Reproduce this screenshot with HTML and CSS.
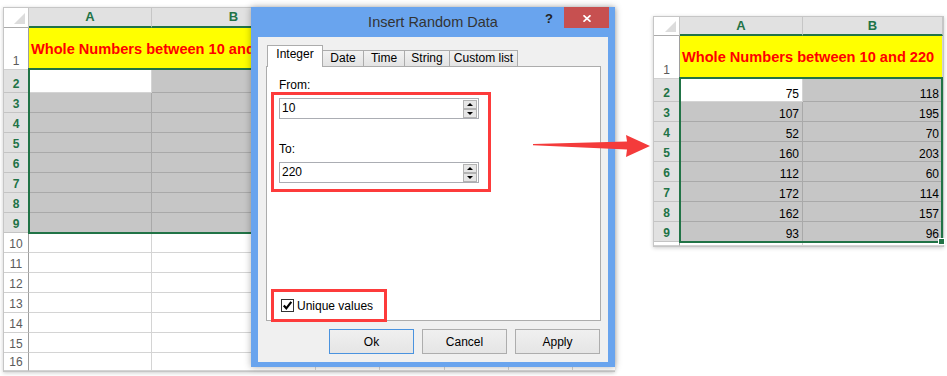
FILE: index.html
```html
<!DOCTYPE html>
<html lang="en">
<head>
	<meta charset="UTF-8">
	<title>Insert Random Data</title>
	<link rel="stylesheet" href="styles.css">
</head>
<body>
	<div class="stage">
		<!-- sheet before -->
		<div class="sheet sheet-left">
			<div class="c h corner"></div><div class="c h sel">A</div><div class="c h sel">B</div><div class="c h"></div><div class="c h"></div><div class="c h"></div><div class="c h"></div><div class="c h"></div>
			<div class="c rh">1</div><div class="c cell-title">Whole Numbers between 10 and 220</div><div class="c"></div><div class="c"></div><div class="c"></div><div class="c"></div><div class="c"></div>
			<div class="c rh sel">2</div><div class="c"></div><div class="c g"></div><div class="c"></div><div class="c"></div><div class="c"></div><div class="c"></div><div class="c"></div>
			<div class="c rh sel">3</div><div class="c g"></div><div class="c g"></div><div class="c"></div><div class="c"></div><div class="c"></div><div class="c"></div><div class="c"></div>
			<div class="c rh sel">4</div><div class="c g"></div><div class="c g"></div><div class="c"></div><div class="c"></div><div class="c"></div><div class="c"></div><div class="c"></div>
			<div class="c rh sel">5</div><div class="c g"></div><div class="c g"></div><div class="c"></div><div class="c"></div><div class="c"></div><div class="c"></div><div class="c"></div>
			<div class="c rh sel">6</div><div class="c g"></div><div class="c g"></div><div class="c"></div><div class="c"></div><div class="c"></div><div class="c"></div><div class="c"></div>
			<div class="c rh sel">7</div><div class="c g"></div><div class="c g"></div><div class="c"></div><div class="c"></div><div class="c"></div><div class="c"></div><div class="c"></div>
			<div class="c rh sel">8</div><div class="c g"></div><div class="c g"></div><div class="c"></div><div class="c"></div><div class="c"></div><div class="c"></div><div class="c"></div>
			<div class="c rh sel">9</div><div class="c g"></div><div class="c g"></div><div class="c"></div><div class="c"></div><div class="c"></div><div class="c"></div><div class="c"></div>
			<div class="c rh">10</div><div class="c"></div><div class="c"></div><div class="c"></div><div class="c"></div><div class="c"></div><div class="c"></div><div class="c"></div>
			<div class="c rh">11</div><div class="c"></div><div class="c"></div><div class="c"></div><div class="c"></div><div class="c"></div><div class="c"></div><div class="c"></div>
			<div class="c rh">12</div><div class="c"></div><div class="c"></div><div class="c"></div><div class="c"></div><div class="c"></div><div class="c"></div><div class="c"></div>
			<div class="c rh">13</div><div class="c"></div><div class="c"></div><div class="c"></div><div class="c"></div><div class="c"></div><div class="c"></div><div class="c"></div>
			<div class="c rh">14</div><div class="c"></div><div class="c"></div><div class="c"></div><div class="c"></div><div class="c"></div><div class="c"></div><div class="c"></div>
			<div class="c rh">15</div><div class="c"></div><div class="c"></div><div class="c"></div><div class="c"></div><div class="c"></div><div class="c"></div><div class="c"></div>
			<div class="c rh">16</div><div class="c"></div><div class="c"></div><div class="c"></div><div class="c"></div><div class="c"></div><div class="c"></div><div class="c"></div>
			<div class="selection"></div>
		</div>

		<!-- dialog -->
		<div class="dialog">
			<div class="titlebar">
				<div class="dialog-title">Insert Random Data</div>
				<div class="title-tools">
					<span class="help">?</span>
					<span class="close">
						<svg width="8" height="7" viewBox="0 0 8 7"><path d="M0.5 0.3 L7.5 6.7 M7.5 0.3 L0.5 6.7" stroke="#fff" stroke-width="1.7"/></svg>
					</span>
				</div>
			</div>
			<div class="dialog-body">
				<div class="tabs">
					<span class="tab tab-integer active">Integer</span>
					<span class="tab tab-date">Date</span>
					<span class="tab tab-time">Time</span>
					<span class="tab tab-string">String</span>
					<span class="tab tab-custom">Custom list</span>
				</div>
				<div class="panel">
					<div class="field-label">From:</div>
					<div class="mark mark-range">
						<div class="spin">
							<span>10</span>
							<span class="spin-btns"><span class="spin-btn up"></span><span class="spin-btn down"></span></span>
						</div>
						<div class="field-label">To:</div>
						<div class="spin">
							<span>220</span>
							<span class="spin-btns"><span class="spin-btn up"></span><span class="spin-btn down"></span></span>
						</div>
					</div>
					<div class="mark mark-check">
						<span class="checkbox">
							<svg width="11" height="11" viewBox="0 0 11 11"><path d="M1.8 5.6 L4.3 8.3 L9.3 1.8" fill="none" stroke="#000" stroke-width="2.2"/></svg>
						</span>
						Unique values
					</div>
				</div>
				<div class="buttons">
					<button class="btn btn-default">Ok</button>
					<button class="btn">Cancel</button>
					<button class="btn">Apply</button>
				</div>
			</div>
		</div>

		<svg class="arrow" width="118" height="24" viewBox="0 0 118 24">
			<polygon points="0,10 94,7.5 93,1 117,12 93,23 94,15.5 0,11.2" fill="#f43b3b"/>
		</svg>

		<!-- sheet after -->
		<div class="sheet sheet-right">
			<div class="c h corner"></div><div class="c h sel">A</div><div class="c h sel">B</div>
			<div class="c rh">1</div><div class="c cell-title">Whole Numbers between 10 and 220</div>
			<div class="c rh sel">2</div><div class="c">75</div><div class="c g">118</div>
			<div class="c rh sel">3</div><div class="c g">107</div><div class="c g">195</div>
			<div class="c rh sel">4</div><div class="c g">52</div><div class="c g">70</div>
			<div class="c rh sel">5</div><div class="c g">160</div><div class="c g">203</div>
			<div class="c rh sel">6</div><div class="c g">112</div><div class="c g">60</div>
			<div class="c rh sel">7</div><div class="c g">172</div><div class="c g">114</div>
			<div class="c rh sel">8</div><div class="c g">162</div><div class="c g">157</div>
			<div class="c rh sel">9</div><div class="c g">93</div><div class="c g">96</div>
			<div class="c rh"></div><div class="c"></div><div class="c"></div>
			<div class="selection"></div>
			<div class="handle"></div>
		</div>
	</div>
</body>
</html>
```

FILE: styles.css
```css
*{
	margin:0;
	padding:0;
	box-sizing:border-box;
}
body{
	background:#fff;
	font-family:"Liberation Sans", Arial, sans-serif;
	font-size:12px;
	color:#000;
}
.stage{
	position:relative;
	display:flex;
	align-items:flex-start;
	width:947px;
	height:376px;
	overflow:hidden;
}

/* spreadsheets */
.sheet{
	position:relative;
	display:grid;
	background:#fff;
	border:1px solid #c6c6c6;
	box-shadow:0 1px 4px rgba(0,0,0,.2);
	line-height:14px;
}
.sheet-left{
	margin:7px 0 0 3px;
	width:612px;
	overflow:hidden;
	border-right:0;
	grid-template-columns:25px 123px 164px 64px 65px 64px 64px 64px;
	grid-template-rows:20px 42px 23px repeat(13,20px) 18px;
}
.sheet-right{
	margin:16px 0 0 38px;
	grid-template-columns:26px 123px 140px;
	grid-template-rows:19px 43px 23px repeat(7,20px) 4px;
}
.c{
	display:flex;
	align-items:flex-end;
	justify-content:flex-end;
	padding:0 3px;
	border-right:1px solid #d4d4d4;
	border-bottom:1px solid #d4d4d4;
	white-space:nowrap;
	overflow:hidden;
}
.c.g{
	background:#c6c6c6;
	border-color:#a9a9a9;
}
.h{
	justify-content:center;
	align-items:center;
	font-size:13px;
	color:#444;
	border-color:#c6c6c6;
	border-bottom-color:#ababab;
}
.h.sel{
	background:#e1e1e1;
	color:#217346;
	font-weight:bold;
	border-bottom:2px solid #217346;
}
.corner{
	justify-content:flex-end;
	align-items:flex-end;
	padding:0 3px 3px 0;
	border-bottom-color:#ababab;
}
.corner::after{
	content:'';
	width:11px;
	height:11px;
	background:#dcdcdc;
	clip-path:polygon(100% 0,100% 100%,0 100%);
}
.rh{
	justify-content:center;
	padding-bottom:1px;
	color:#5a5a5a;
	border-right-color:#9e9e9e;
	border-bottom-color:#d0d0d0;
}
.rh.sel{
	background:#e1e1e1;
	color:#217346;
	font-weight:bold;
	border-bottom-color:#c4c4c4;
}
.cell-title{
	grid-column:span 2;
	justify-content:flex-start;
	align-items:center;
	padding-left:2px;
	background:#ffff00;
	color:#ff0000;
	font-weight:bold;
	font-size:14.6px;
}
/* selection frame sits over cells A2:B9 */
.selection{
	position:absolute;
	grid-row:3 / 11;
	grid-column:2 / 4;
	top:-2px;
	bottom:-1px;
	left:-1px;
	right:0;
	border:2px solid #217346;
}
.handle{
	position:absolute;
	grid-row:10 / 11;
	grid-column:3 / 4;
	right:-2px;
	bottom:-3px;
	width:7px;
	height:7px;
	background:#217346;
	border:1px solid #fff;
}

/* dialog */
.dialog{
	position:absolute;
	left:251px;
	top:7px;
	z-index:2;
	width:364px;
	height:360px;
	display:flex;
	flex-direction:column;
	background:#69a4ee;
	box-shadow:0 0 7px rgba(0,0,0,.3);
}
.titlebar{
	height:30px;
	display:grid;
	grid-template-columns:1fr auto 1fr;
}
.dialog-title{
	grid-column:2;
	padding-top:7px;
	font-size:14.5px;
	line-height:17px;
	color:#333;
	white-space:nowrap;
}
.title-tools{
	grid-column:3;
	display:flex;
	justify-content:flex-end;
	align-items:flex-start;
	padding-right:6px;
}
.help{
	margin:5px 11px 0 0;
	font-size:13px;
	font-weight:bold;
	line-height:14px;
	color:#222;
}
.close{
	width:45px;
	height:21px;
	display:flex;
	align-items:center;
	justify-content:center;
	padding-top:1px;
	background:#c75050;
}
.dialog-body{
	flex:1;
	margin:0 7px 5px;
	padding:8px 7px 8px 8px;
	display:flex;
	flex-direction:column;
	background:#f0f0f0;
}
.tabs{
	position:relative;
	z-index:1;
	height:21px;
	display:flex;
	align-items:flex-end;
	padding-left:1px;
}
.tab{
	height:16px;
	margin-left:-1px;
	border:1px solid #acacac;
	border-bottom:0;
	background:linear-gradient(#f2f2f2,#e3e3e3);
	text-align:center;
	line-height:14px;
}
.tab-integer{ width:56px; margin-left:0; }
.tab-date{ width:42px; }
.tab-time{ width:42px; }
.tab-string{ width:46px; }
.tab-custom{ width:69px; }
.tab.active{
	height:22px;
	margin-bottom:-1px;
	padding-top:1px;
	background:#fff;
}
.panel{
	height:255px;
	display:flex;
	flex-direction:column;
	padding:0 4px;
	border:1px solid #acacac;
	background:#fff;
}
.field-label{
	margin:11px 0 0 8px;
	line-height:14px;
}
.mark{
	border:3px solid #fd3b3b;
}
.mark-range{
	width:220px;
	padding:3px 0 6px 5px;
}
.mark-range .field-label{
	margin:23px 0 6px 0;
}
.spin{
	width:200px;
	height:21px;
	display:flex;
	align-items:flex-start;
	justify-content:space-between;
	padding:0 1px 0 2px;
	border:1px solid #abadb3;
	background:#fff;
	line-height:19px;
}
.spin-btns{
	display:flex;
	flex-direction:column;
	margin-top:1px;
}
.spin-btn{
	width:14px;
	height:9px;
	display:flex;
	align-items:center;
	justify-content:center;
	border:1px solid #b3b3b3;
	background:#e6e6e6;
}
.spin-btn.up::after{
	content:'';
	border-left:3px solid transparent;
	border-right:3px solid transparent;
	border-bottom:3px solid #000;
}
.spin-btn.down::after{
	content:'';
	border-left:3px solid transparent;
	border-right:3px solid transparent;
	border-top:3px solid #000;
}
.mark-check{
	width:116px;
	height:33px;
	margin-top:auto;
	margin-bottom:-2px;
	display:flex;
	align-items:center;
	gap:3px;
	padding-left:7px;
	line-height:14px;
}
.checkbox{
	width:13px;
	height:13px;
	display:flex;
	align-items:center;
	justify-content:center;
	border:1px solid #333;
	background:#fff;
}
.buttons{
	margin-top:8px;
	padding-right:1px;
	display:flex;
	justify-content:flex-end;
	gap:8px;
}
.btn{
	width:85px;
	height:25px;
	border:1px solid #adadad;
	background:linear-gradient(#f0f0f0,#e5e5e5);
	font-family:"Liberation Sans", Arial, sans-serif;
	font-size:12px;
	color:#000;
}
.btn-default{
	border-color:#4a93df;
}

/* annotation arrow */
.arrow{
	position:absolute;
	left:533px;
	top:134px;
	z-index:3;
}
```
